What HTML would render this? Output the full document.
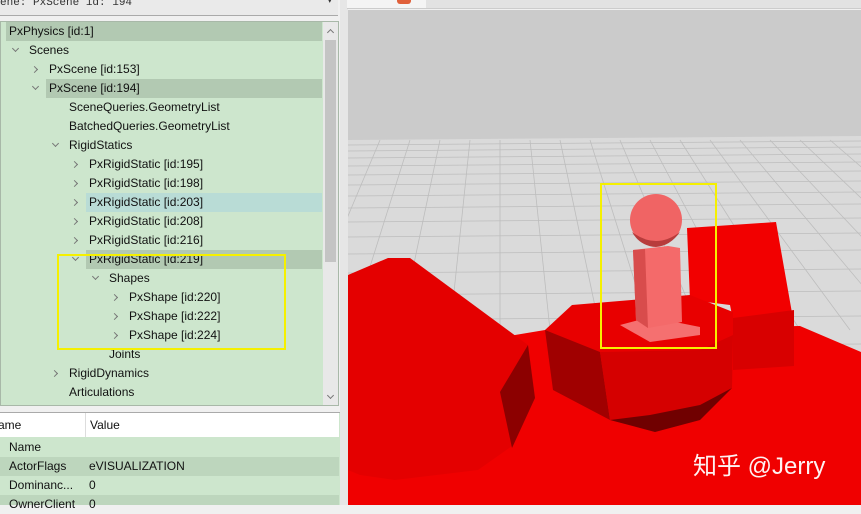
<!DOCTYPE html>
<html><head><meta charset="utf-8"><style>
*{margin:0;padding:0;box-sizing:border-box}
body{width:861px;height:505px;overflow:hidden;background:#f0f0f0;font-family:"Liberation Sans","Noto Sans CJK SC",sans-serif;font-size:12px;color:#111;position:relative}
.abs{position:absolute}
.row{position:absolute;height:19px;line-height:19px;white-space:nowrap}
.r,.d{position:absolute;width:5px;height:5px;border-top:1.5px solid #777;border-right:1.5px solid #777}
.r{transform:rotate(45deg)}
.d{transform:rotate(135deg)}
</style></head><body>
<div class="abs" style="left:0;top:0;width:338px;height:16px;background:#eaeaea;border-bottom:1px solid #aaa;font-family:'Liberation Mono',monospace;font-size:11px;line-height:6px;color:#333">ene: PxScene id: 194<span style="position:absolute;right:6px;top:-2px;font-size:9px">▾</span></div>
<div class="abs" style="left:0;top:21px;width:339px;height:385px;background:#cde6cd;border:1px solid #a8b8a8"></div>
<div class="abs" style="left:6px;top:22px;width:316px;height:19px;background:#b2c9b2"></div>
<div class="abs" style="left:46px;top:79px;width:276px;height:19px;background:#b2c9b2"></div>
<div class="abs" style="left:86px;top:193px;width:236px;height:19px;background:#b9dcd6"></div>
<div class="abs" style="left:86px;top:250px;width:236px;height:19px;background:#b2c9b2"></div>
<div class="abs" style="left:323px;top:22px;width:15px;height:383px;background:#e8e8e8"></div>
<div class="abs" style="left:325px;top:40px;width:11px;height:222px;background:#c4c4c4"></div>
<div class="d" style="left:328px;top:30px;transform:rotate(-45deg)"></div>
<div class="d" style="left:328px;top:393px"></div>
<div class="row" style="left:9px;top:22px">PxPhysics [id:1]</div>
<div class="d" style="left:13px;top:46px"></div><div class="row" style="left:29px;top:41px">Scenes</div>
<div class="r" style="left:32px;top:67px"></div><div class="row" style="left:49px;top:60px">PxScene [id:153]</div>
<div class="d" style="left:33px;top:84px"></div><div class="row" style="left:49px;top:79px">PxScene [id:194]</div>
<div class="row" style="left:69px;top:98px">SceneQueries.GeometryList</div>
<div class="row" style="left:69px;top:117px">BatchedQueries.GeometryList</div>
<div class="d" style="left:53px;top:141px"></div><div class="row" style="left:69px;top:136px">RigidStatics</div>
<div class="r" style="left:72px;top:162px"></div><div class="row" style="left:89px;top:155px">PxRigidStatic [id:195]</div>
<div class="r" style="left:72px;top:181px"></div><div class="row" style="left:89px;top:174px">PxRigidStatic [id:198]</div>
<div class="r" style="left:72px;top:200px"></div><div class="row" style="left:89px;top:193px">PxRigidStatic [id:203]</div>
<div class="r" style="left:72px;top:219px"></div><div class="row" style="left:89px;top:212px">PxRigidStatic [id:208]</div>
<div class="r" style="left:72px;top:238px"></div><div class="row" style="left:89px;top:231px">PxRigidStatic [id:216]</div>
<div class="d" style="left:73px;top:255px"></div><div class="row" style="left:89px;top:250px">PxRigidStatic [id:219]</div>
<div class="d" style="left:93px;top:274px"></div><div class="row" style="left:109px;top:269px">Shapes</div>
<div class="r" style="left:112px;top:295px"></div><div class="row" style="left:129px;top:288px">PxShape [id:220]</div>
<div class="r" style="left:112px;top:314px"></div><div class="row" style="left:129px;top:307px">PxShape [id:222]</div>
<div class="r" style="left:112px;top:333px"></div><div class="row" style="left:129px;top:326px">PxShape [id:224]</div>
<div class="row" style="left:109px;top:345px">Joints</div>
<div class="r" style="left:52px;top:371px"></div><div class="row" style="left:69px;top:364px">RigidDynamics</div>
<div class="row" style="left:69px;top:383px">Articulations</div>
<div class="abs" style="left:57px;top:254px;width:229px;height:96px;border:2px solid #f5f000"></div>
<div class="abs" style="left:0;top:412px;width:340px;height:93px;background:#cde6cd;border-top:1px solid #aaa"></div>
<div class="abs" style="left:0;top:413px;width:339px;height:24px;background:#fff"></div>
<div class="abs" style="left:85px;top:413px;width:1px;height:24px;background:#ddd"></div>
<div class="row" style="left:-2px;top:416px">ame</div><div class="row" style="left:90px;top:416px">Value</div>
<div class="abs" style="left:0;top:457px;width:339px;height:19px;background:#bdd6bd"></div>
<div class="abs" style="left:0;top:495px;width:339px;height:10px;background:#bdd6bd"></div>
<div class="row" style="left:9px;top:438px">Name</div>
<div class="row" style="left:9px;top:457px">ActorFlags</div><div class="row" style="left:89px;top:457px">eVISUALIZATION</div>
<div class="row" style="left:9px;top:476px">Dominanc...</div><div class="row" style="left:89px;top:476px">0</div>
<div class="row" style="left:9px;top:495px">OwnerClient</div><div class="row" style="left:89px;top:495px">0</div>
<div class="abs" style="left:340px;top:0;width:8px;height:505px;background:#e6e6e6"></div>
<div class="abs" style="left:347px;top:0;width:514px;height:9px;background:#f4f4f4;border-bottom:1px solid #ccc"></div>
<div class="abs" style="left:397px;top:0;width:14px;height:4px;background:#e0603a;border-radius:0 0 3px 3px"></div>
<div class="abs" style="left:426px;top:0;width:435px;height:8px;background:#e2e2e2"></div>
<svg class="abs" style="left:0;top:0" width="861" height="505" viewBox="0 0 861 505">
<defs><clipPath id="vp"><rect x="348" y="10" width="513" height="495"/></clipPath></defs>
<g clip-path="url(#vp)">
<rect x="348" y="10" width="513" height="495" fill="#cbcbcb"/>
<polygon points="348,140 861,136 861,505 348,505" fill="#dadada"/>
<g stroke="#bdbdbd" stroke-width="0.8">
<line x1="348" y1="145" x2="861" y2="141"/><line x1="348" y1="151" x2="861" y2="147"/><line x1="348" y1="158" x2="861" y2="154"/><line x1="348" y1="166" x2="861" y2="162"/><line x1="348" y1="175" x2="861" y2="171"/><line x1="348" y1="185" x2="861" y2="181"/><line x1="348" y1="196" x2="861" y2="192"/><line x1="348" y1="208" x2="861" y2="204"/><line x1="348" y1="222" x2="861" y2="218"/><line x1="348" y1="237" x2="861" y2="233"/><line x1="348" y1="254" x2="861" y2="250"/><line x1="348" y1="273" x2="861" y2="269"/><line x1="348" y1="295" x2="861" y2="291"/><line x1="348" y1="320" x2="861" y2="316"/><line x1="348" y1="348" x2="861" y2="344"/>
<line x1="380" y1="140" x2="300" y2="330"/><line x1="410" y1="140" x2="350" y2="330"/><line x1="440" y1="140" x2="400" y2="330"/><line x1="470" y1="140" x2="450" y2="330"/><line x1="500" y1="140" x2="500" y2="330"/><line x1="530" y1="140" x2="550" y2="330"/><line x1="560" y1="140" x2="600" y2="330"/><line x1="590" y1="140" x2="650" y2="330"/><line x1="620" y1="140" x2="700" y2="330"/><line x1="650" y1="140" x2="750" y2="330"/><line x1="680" y1="140" x2="800" y2="330"/><line x1="710" y1="140" x2="850" y2="330"/><line x1="740" y1="140" x2="900" y2="330"/><line x1="770" y1="140" x2="950" y2="330"/><line x1="800" y1="140" x2="1000" y2="330"/><line x1="830" y1="140" x2="1050" y2="330"/>
</g>
<polygon points="348,360 515,335 545,330 800,326 861,352 861,505 348,505" fill="#f00000"/>
<polygon points="348,275 388,258 410,258 528,345 512,446 478,470 395,480 360,475 348,470" fill="#e40000"/>
<polygon points="500,392 528,345 535,398 512,448" fill="#8c0000"/>
<polygon points="687,228 776,222 792,313 733,320 730,305 690,300" fill="#f20000"/>
<polygon points="733,318 794,310 794,366 733,370" fill="#d80000"/>
<polygon points="545,330 572,305 690,295 733,312 733,335 700,350 600,352" fill="#e80000"/>
<polygon points="545,330 600,352 610,420 553,390" fill="#a00000"/>
<polygon points="600,352 700,350 733,335 732,388 700,420 655,432 610,420" fill="#d50000"/>
<polygon points="610,420 655,432 700,420 732,388 700,405 650,415" fill="#700000"/>
<polygon points="620,325 650,317 700,327 700,335 650,342" fill="#f57070"/>
<polygon points="633,250 668,246 680,248 682,322 648,328 636,320" fill="#f46a6a"/>
<polygon points="633,250 645,249 648,328 636,320" fill="#d84c4c"/>
<circle cx="656" cy="220" r="26" fill="#f06464"/>
<path d="M632,232 Q656,250 680,232 Q670,246 656,247 Q640,246 632,232Z" fill="#b83c3c"/>
<rect x="601" y="184" width="115" height="164" fill="none" stroke="#f5f000" stroke-width="2"/>
<text x="693" y="474" fill="#fff" font-size="24" font-family="Liberation Sans,Noto Sans CJK SC,sans-serif" opacity="0.95">知乎 @Jerry</text>
</g>
</svg>
</body></html>
